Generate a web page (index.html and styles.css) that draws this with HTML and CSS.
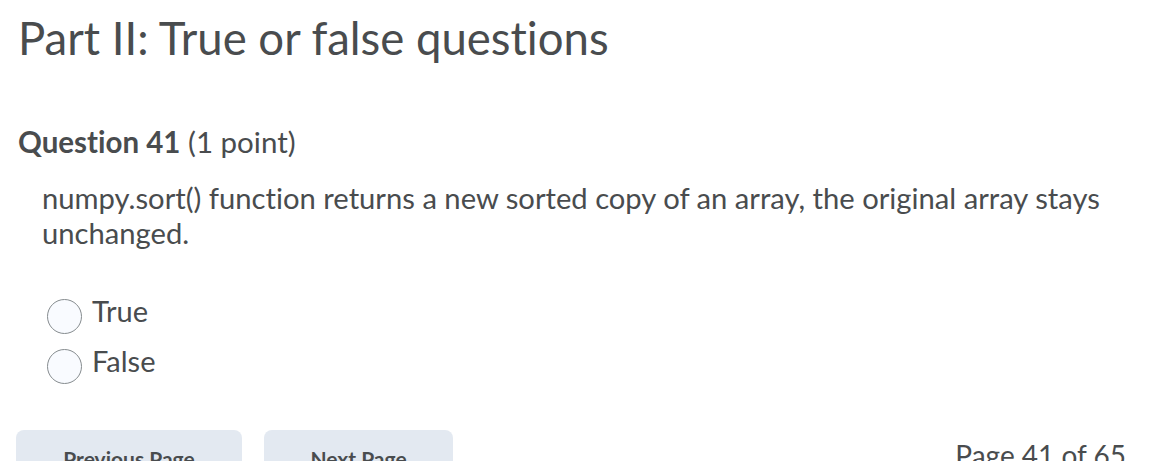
FILE: index.html
```html
<!DOCTYPE html>
<html>
<head>
<meta charset="utf-8">
<link rel="stylesheet" href="styles.css">
</head>
<body>
<div class="page">
  <h1 class="title">Part II: True or false questions</h1>
  <h2 class="qhead"><span class="qnum">Question 41</span> (1 point)</h2>
  <p class="qtext">numpy.sort() function returns a new sorted copy of an array, the original array stays unchanged.</p>
  <div class="options">
    <label class="option"><span class="radio"></span><span class="olabel">True</span></label>
    <label class="option"><span class="radio"></span><span class="olabel">False</span></label>
  </div>
  <div class="footer">
    <div class="buttons">
      <button class="btn btn-prev">Previous Page</button>
      <button class="btn btn-next">Next Page</button>
    </div>
    <div class="pagecount">Page 41 of 65</div>
  </div>
</div>
</body>
</html>
```
FILE: styles.css
```css
html, body {
  margin: 0;
  padding: 0;
  background: #ffffff;
  overflow: hidden;
}
body {
  font-family: Lato, "Liberation Sans", sans-serif;
  color: #494c4e;
  font-variant-ligatures: none;
}
.page {
  width: 1166px;
  height: 461px;
  padding: 0 0 0 18px;
  box-sizing: border-box;
}
.title {
  margin: 0;
  padding-top: 11px;
  font-size: 45.5px;
  font-weight: 400;
  line-height: 54px;
}
.qhead {
  margin: 60px 0 0 0;
  font-size: 29.5px;
  font-weight: 400;
  line-height: 34px;
}
.qnum {
  font-weight: 700;
}
.qtext {
  margin: 21px 0 0 24px;
  width: 1080px;
  font-size: 29.2px;
  line-height: 35px;
}
.options {
  margin: 49px 0 0 29px;
  display: flex;
  flex-direction: column;
  gap: 15px;
}
.option {
  display: flex;
  align-items: flex-start;
  gap: 10px;
  height: 35px;
}
.radio {
  flex: none;
  width: 33px;
  height: 33px;
  border: 1px solid #868c8f;
  border-radius: 50%;
  background: #f9fbff;
}
.olabel {
  font-size: 29px;
  line-height: 35px;
  margin-top: -6px;
}
.footer {
  margin-top: 46px;
  display: flex;
  justify-content: space-between;
  align-items: flex-start;
  padding-right: 40px;
}
.buttons {
  display: flex;
  gap: 22px;
  margin-left: -2px;
}
.btn {
  font-family: Lato, "Liberation Sans", sans-serif;
  font-variant-ligatures: none;
  font-size: 21px;
  font-weight: 700;
  color: #494c4e;
  background: #e3e9f1;
  border: none;
  border-radius: 8px;
  height: 56px;
  padding: 0;
  display: flex;
  align-items: center;
  justify-content: center;
}
.btn-prev { width: 226px; }
.btn-next { width: 189px; }
.pagecount {
  font-size: 28px;
  line-height: 34px;
  margin-top: 8px;
}
```
